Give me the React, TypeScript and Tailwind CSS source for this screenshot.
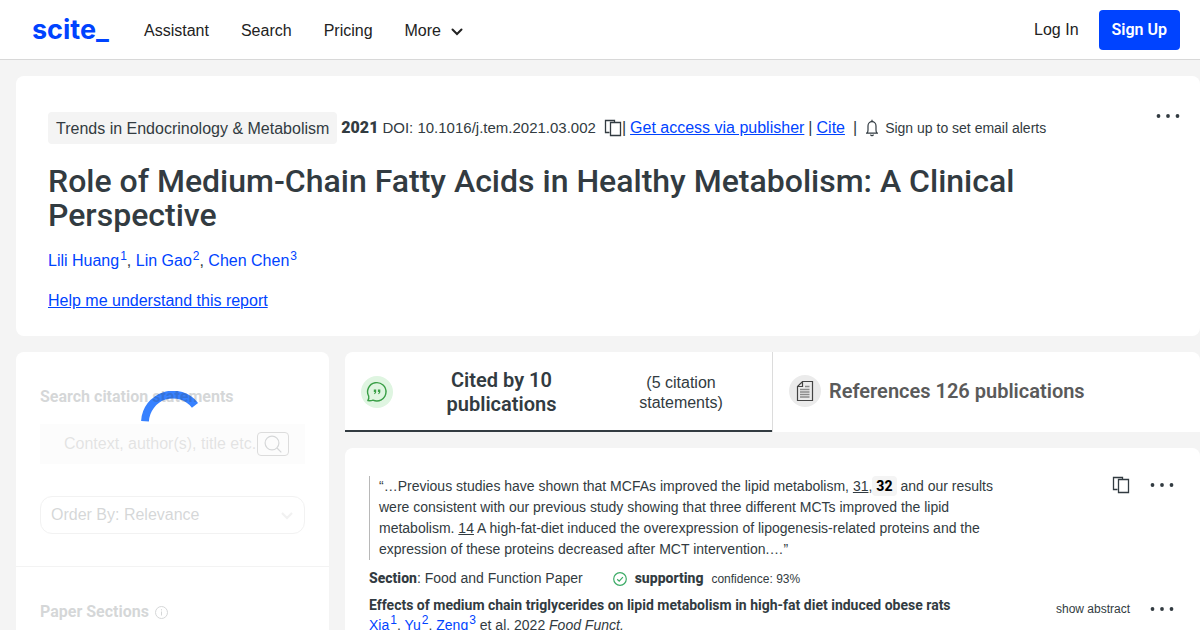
import React, { useState } from 'react';

const navLinks = ['Assistant', 'Search', 'Pricing'];

const authors = [
  { name: 'Lili Huang', rank: 1 },
  { name: 'Lin Gao', rank: 2 },
  { name: 'Chen Chen', rank: 3 },
];

const citingAuthors = [
  { name: 'Xia', rank: 1 },
  { name: 'Yu', rank: 2 },
  { name: 'Zeng', rank: 3 },
];

const CopyIcon: React.FC = () => (
  <svg width="18" height="18" viewBox="0 0 18 18" fill="none" stroke="currentColor" strokeWidth="1.3">
    <path d="M5.5 13.5H1.5V1.5h9v2" />
    <path d="M6.5 3.5h10v13h-10z" />
  </svg>
);

const DotsIcon: React.FC = () => (
  <svg width="24" height="6" viewBox="0 0 24 6" fill="currentColor">
    <circle cx="2.5" cy="3" r="1.9" />
    <circle cx="12" cy="3" r="1.9" />
    <circle cx="21.5" cy="3" r="1.9" />
  </svg>
);

const BellIcon: React.FC = () => (
  <svg width="14" height="18" viewBox="0 0 14 18" fill="none" stroke="currentColor" strokeWidth="1.2">
    <path d="M1 14.2h12M2.2 14c.5-.8.8-1.6.8-3V7a4 4.3 0 0 1 8 0v4c0 1.4.3 2.2.8 3" />
    <path d="M7 .8v2M5.7 15.4a1.3 1.3 0 0 0 2.6 0" />
  </svg>
);

const QuoteIcon: React.FC = () => (
  <svg width="32" height="32" viewBox="0 0 32 32" fill="none" className="shrink-0">
    <circle cx="16" cy="16" r="16" fill="#dff5e1" />
    <path
      d="M6.8 24.600c1.100-1.300 1.300-2.500.9-4.400A9.200 9.200 0 1 1 12 24.200c-1.700.6-3.300.7-5.200.4z"
      stroke="#3a9f47"
      strokeWidth="1.4"
      strokeLinejoin="round"
    />
    <path
      d="M12.8 13.5h2.4v2.2c0 1.3-.7 2.1-1.9 2.5l-.3-.7c.6-.3.9-.8.9-1.5h-1.100zM16.9 13.500h2.400v2.200c0 1.300-.7 2.100-1.900 2.500l-.3-.7c.6-.3.9-.8.9-1.500h-1.100z"
      fill="#3a9f47"
    />
  </svg>
);

const DocumentIcon: React.FC = () => (
  <svg width="32" height="32" viewBox="0 0 32 32" fill="none" className="shrink-0">
    <circle cx="16" cy="16" r="16" fill="#ebebeb" />
    <path d="M13.5 6.5h10v19h-15v-14zM13.5 6.5v5h-5" stroke="#444" strokeWidth="1.2" />
    <path d="M16 11.5h4.5M11 14.5h9.5M11 17h9.5M11 19.5h9.5M11 22h9.5" stroke="#8a8a8a" strokeWidth="1.3" />
  </svg>
);

const Spinner: React.FC = () => (
  <svg width="64" height="64" viewBox="0 0 64 64" fill="none" className="absolute left-[125px] top-[39px]">
    <path d="M4 30.2A28 28 0 0 1 54 14.3" stroke="#3781ff" strokeWidth="7.8" />
  </svg>
);

const AuthorLinks: React.FC<{ list: { name: string; rank: number }[] }> = ({ list }) => (
  <>
    {list.map((author, i) => (
      <React.Fragment key={author.name}>
        {i > 0 && ', '}
        <a href="#" className="text-[#0043ff]">
          {author.name}
          <sup className="ml-px text-xs">{author.rank}</sup>
        </a>
      </React.Fragment>
    ))}
  </>
);

const Header: React.FC = () => (
  <header className="flex h-[60px] shrink-0 items-center justify-between border-b border-[#d8d8d8] bg-white pl-8 pr-5 text-[#222]">
    <div className="flex items-center gap-8">
      <a href="#" className="w-20 font-['Inter'] text-[27px] leading-8 font-bold text-[#0043ff]">scite_</a>
      <nav className="flex items-center gap-8 pt-0.5">
        {navLinks.map(link => (
          <a key={link} href="#">{link}</a>
        ))}
        <button type="button" className="flex items-center gap-2">
          More
          <svg width="16" height="16" viewBox="0 0 16 16" fill="none" stroke="currentColor" strokeWidth="2" strokeLinecap="round">
            <path d="M3.5 6.5 8 11l4.500-4.500" />
          </svg>
        </button>
      </nav>
    </div>
    <div className="flex items-center gap-5">
      <a href="#">Log In</a>
      <a href="#" className="flex h-10 items-center rounded bg-[#0043ff] px-[13px] font-['Roboto'] font-semibold text-white">Sign Up</a>
    </div>
  </header>
);

const PaperHeader: React.FC = () => (
  <section className="relative shrink-0 rounded-lg bg-white px-8 pt-9 pb-[23px]">
    <div className="flex items-center whitespace-nowrap">
      <span className="mr-1 rounded bg-[#f4f4f4] px-2 pt-[5px] pb-[3px]">Trends in Endocrinology &amp; Metabolism</span>
      <b className="mr-1 font-['Roboto'] font-black">2021</b>
      <span className="text-[15px]">DOI: 10.1016/j.tem.2021.03.002</span>
      <button type="button" aria-label="Copy DOI" className="ml-2"><CopyIcon /></button>
      <span className="mr-1">|</span>
      <a href="#" className="text-[#0043ff] underline">Get access via publisher</a>
      <span className="mx-1">|</span>
      <a href="#" className="text-[#0043ff] underline">Cite</a>
      <span className="mx-2">|</span>
      <button type="button" className="flex items-center gap-1.5 text-sm">
        <BellIcon />
        Sign up to set email alerts
      </button>
    </div>
    <button type="button" aria-label="More actions" className="absolute top-9 right-5 py-px"><DotsIcon /></button>
    <h1 className="mt-5 max-w-[1000px] font-['Roboto'] text-[32px] leading-[34px] font-medium">
      Role of Medium-Chain Fatty Acids in Healthy Metabolism: A Clinical Perspective
    </h1>
    <p className="mt-[17px]"><AuthorLinks list={authors} /></p>
    <p className="mt-4"><a href="#" className="text-[#0043ff] underline">Help me understand this report</a></p>
  </section>
);

const Sidebar: React.FC = () => {
  const [query, setQuery] = useState('');

  return (
    <aside className="relative w-[313px] shrink-0 rounded-t-lg bg-white">
      <Spinner />
      <div className="relative opacity-20">
        <div className="border-b border-[#c4c4c4] px-6 pt-[33px] pb-8">
          <label htmlFor="search" className="block font-['Roboto'] font-bold">Search citation statements</label>
          <div className="mt-[15px] flex h-10 items-center bg-[#f4f4f4] pr-4 pl-6">
            <input
              id="search"
              type="text"
              value={query}
              onChange={e => setQuery(e.target.value)}
              placeholder="Context, author(s), title etc."
              className="min-w-0 flex-1 outline-none placeholder:text-[#777]"
            />
            <button type="button" aria-label="Search" className="flex h-6 w-8 shrink-0 items-center justify-center rounded-sm border border-[#555]">
              <svg width="18" height="18" viewBox="0 0 18 18" fill="none" stroke="currentColor" strokeWidth="1.2">
                <circle cx="8" cy="8" r="6.9" />
                <path d="m13 13 4.300 4.300" />
              </svg>
            </button>
          </div>
          <div className="relative mt-8">
            <select aria-label="Order by" className="h-[38px] w-full appearance-none rounded-xl border border-[#c0c0c0] px-2.5">
              <option>Order By: Relevance</option>
              <option>Order By: Newest</option>
            </select>
            <svg width="12" height="8" viewBox="0 0 12 8" fill="none" stroke="#bbb" strokeWidth="2" className="absolute top-4 right-3">
              <path d="m1 1 5 5 5-5" />
            </svg>
          </div>
        </div>
        <h2 className="flex items-center gap-1.5 px-6 pt-[33px] font-['Roboto'] font-bold">
          Paper Sections
          <svg width="13" height="13" viewBox="0 0 13 13" fill="none" stroke="currentColor">
            <circle cx="6.5" cy="6.5" r="6" />
            <path d="M6.5 5.5v4M6.5 3.2v1.2" />
          </svg>
        </h2>
      </div>
    </aside>
  );
};

const Tabs: React.FC = () => (
  <div className="flex h-20 shrink-0 overflow-hidden rounded-t-lg bg-white">
    <button type="button" className="flex flex-1 items-center border-b-2 border-[#323b41] px-4 pt-0.5">
      <QuoteIcon />
      <span className="mr-1 ml-2 flex-1 font-['Roboto'] text-xl leading-6 font-semibold">Cited by 10 publications</span>
      <span className="w-[150px] pt-0.5 leading-5">(5 citation statements)</span>
    </button>
    <button type="button" className="flex flex-1 items-center gap-2 border-l border-[#dcdcdc] px-4 pb-0.5 text-[#5a5a5a]">
      <DocumentIcon />
      <span className="font-['Roboto'] text-xl leading-6 font-semibold">References 126 publications</span>
    </button>
  </div>
);

const Citation: React.FC = () => (
  <article className="flex-1 rounded-t-lg bg-white pt-7 pr-[26px] pl-6 text-sm leading-[21px]">
    <div className="flex items-start justify-between">
      <blockquote className="w-[630px] border-l border-[#b8b8b8] pl-[9px]">
        “…Previous studies have shown that MCFAs improved the lipid metabolism, <a href="#" className="underline">31</a>,
        <b className="rounded bg-[#f4f4f4] px-1 py-0.5 font-['Roboto'] font-extrabold text-black">32</b> and our results were
        consistent with our previous study showing that three different MCTs improved the lipid
        metabolism. <a href="#" className="underline">14</a> A high-fat-diet induced the overexpression of
        lipogenesis-related proteins and the expression of these proteins decreased after MCT intervention.…”
      </blockquote>
      <div className="flex items-center gap-5">
        <button type="button" aria-label="Copy citation"><CopyIcon /></button>
        <button type="button" aria-label="Citation actions"><DotsIcon /></button>
      </div>
    </div>
    <div className="mt-2 flex items-center">
      <span><b className="font-['Roboto'] font-extrabold">Section</b>: Food and Function Paper</span>
      <svg width="14" height="14" viewBox="0 0 14 14" fill="none" stroke="#3cab66" strokeWidth="1.2" className="ml-[30px]">
        <circle cx="7" cy="7" r="6.3" />
        <path d="m4.2 7.2 2 1.9 3.700-3.900" />
      </svg>
      <b className="ml-2 font-['Roboto'] font-extrabold">supporting</b>
      <span className="ml-2 text-xs">confidence: 93%</span>
    </div>
    <div className="mt-1.5 flex items-center justify-between">
      <div className="leading-5">
        <a href="#" className="block font-['Roboto'] font-bold">
          Effects of medium chain triglycerides on lipid metabolism in high-fat diet induced obese rats
        </a>
        <p>
          <AuthorLinks list={citingAuthors} /> et al. 2022 <i>Food Funct.</i>
        </p>
      </div>
      <div className="flex items-center gap-5 pb-3">
        <button type="button" className="text-xs">show abstract</button>
        <button type="button" aria-label="Publication actions"><DotsIcon /></button>
      </div>
    </div>
  </article>
);

export default function App() {
  return (
    <div className="flex h-screen flex-col overflow-hidden bg-[#f4f4f4] font-['Liberation_Sans',sans-serif] text-base leading-6 text-[#323b41]">
      <Header />
      <main className="flex min-h-0 flex-1 flex-col gap-4 pt-4 pl-4">
        <PaperHeader />
        <div className="flex min-h-0 flex-1 gap-4">
          <Sidebar />
          <div className="flex min-w-0 flex-1 flex-col gap-4">
            <Tabs />
            <Citation />
          </div>
        </div>
      </main>
    </div>
  );
}
